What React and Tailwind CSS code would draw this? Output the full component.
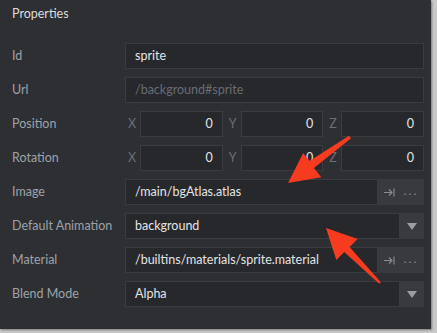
import React from 'react';

const font = { fontFamily: 'Lato, "Noto Sans", sans-serif' };

const Label = ({ children }) => (
  <div className="w-[113px] shrink-0 text-[12.5px] text-[#9da2a8]">{children}</div>
);

const Box = ({ children, className = '' }) => (
  <div className={`h-[26px] border border-[#3b3c41] bg-[#27282c] flex items-center text-[12.5px] ${className}`}>
    {children}
  </div>
);

const TextRow = ({ label, value, muted }) => (
  <div className="flex items-center">
    <Label>{label}</Label>
    <Box className="flex-1 px-[9px]">
      <span className={muted ? 'text-[#686c73]' : 'text-[#e4e4e4]'}>{value}</span>
    </Box>
  </div>
);

const VectorRow = ({ label }) => (
  <div className="flex items-center">
    <Label>{label}</Label>
    <div className="flex-1 grid grid-cols-3 gap-[3px]">
      {['X', 'Y', 'Z'].map((axis) => (
        <div key={axis} className="flex items-center">
          <span className="w-[15px] shrink-0 text-[12.5px] text-[#6b6e74] pl-[3px]">{axis}</span>
          <Box className="flex-1 justify-end pr-[9px]">
            <span className="text-[#e4e4e4]">0</span>
          </Box>
        </div>
      ))}
    </div>
  </div>
);

const ResourceRow = ({ label, value }) => (
  <div className="flex items-center">
    <Label>{label}</Label>
    <div className="flex-1 flex h-[26px]">
      <Box className="flex-1 px-[9px]">
        <span className="text-[#e4e4e4]">{value}</span>
      </Box>
      <div className="w-[46px] bg-[#393a3f] flex items-center justify-center gap-[9px] text-[#8a8d93]">
        <svg width="11" height="9" viewBox="0 0 11 9" fill="none" stroke="currentColor" strokeWidth="1.1">
          <path d="M0 4.5H8M5 1.5L8 4.5L5 7.5M10 0.5V8.5" />
        </svg>
        <span className="text-[12px] tracking-[2px] leading-none -mt-[2px]">...</span>
      </div>
    </div>
  </div>
);

const SelectRow = ({ label, value }) => (
  <div className="flex items-center">
    <Label>{label}</Label>
    <div className="flex-1 flex h-[26px]">
      <Box className="flex-1 px-[9px]">
        <span className="text-[#e4e4e4]">{value}</span>
      </Box>
      <div className="w-[24px] bg-[#393a3f] flex items-center justify-center">
        <svg width="10" height="7" viewBox="0 0 10 7">
          <path d="M0 0H10L5 7Z" fill="#9a9da3" />
        </svg>
      </div>
    </div>
  </div>
);

export default function App() {
  return (
    <div className="w-[437px] h-[333px] bg-[#c9c9c9] overflow-hidden" style={font}>
      <div className="relative w-[431px] h-[329px] bg-[#2e2f33] pl-[12px] pr-[7px] shadow-[1px_1px_2px_rgba(0,0,0,0.4)]">
        <div className="h-[28px] flex items-center text-[12.5px] text-[#dcdcdc]">Properties</div>
        <div className="pt-[15px] flex flex-col gap-[8px]">
          <TextRow label="Id" value="sprite" />
          <TextRow label="Url" value="/background#sprite" muted />
          <VectorRow label="Position" />
          <VectorRow label="Rotation" />
          <ResourceRow label="Image" value="/main/bgAtlas.atlas" />
          <SelectRow label="Default Animation" value="background" />
          <ResourceRow label="Material" value="/builtins/materials/sprite.material" />
          <SelectRow label="Blend Mode" value="Alpha" />
        </div>

        {/* annotation arrows drawn over the panel */}
        <svg className="absolute inset-0 pointer-events-none" width="431" height="329" viewBox="0 0 431 329">
          <polygon
            points="351,138.3 314,168 321.2,177.2 288,183 303.2,153 309.5,161 349,135.8"
            fill="#f63b1e"
          />
          <polygon
            points="380.8,282.2 349.6,247 357.7,238.9 326,228 336.3,259.9 344.2,252 379.2,283.8"
            fill="#f63b1e"
          />
        </svg>
      </div>
    </div>
  );
}
